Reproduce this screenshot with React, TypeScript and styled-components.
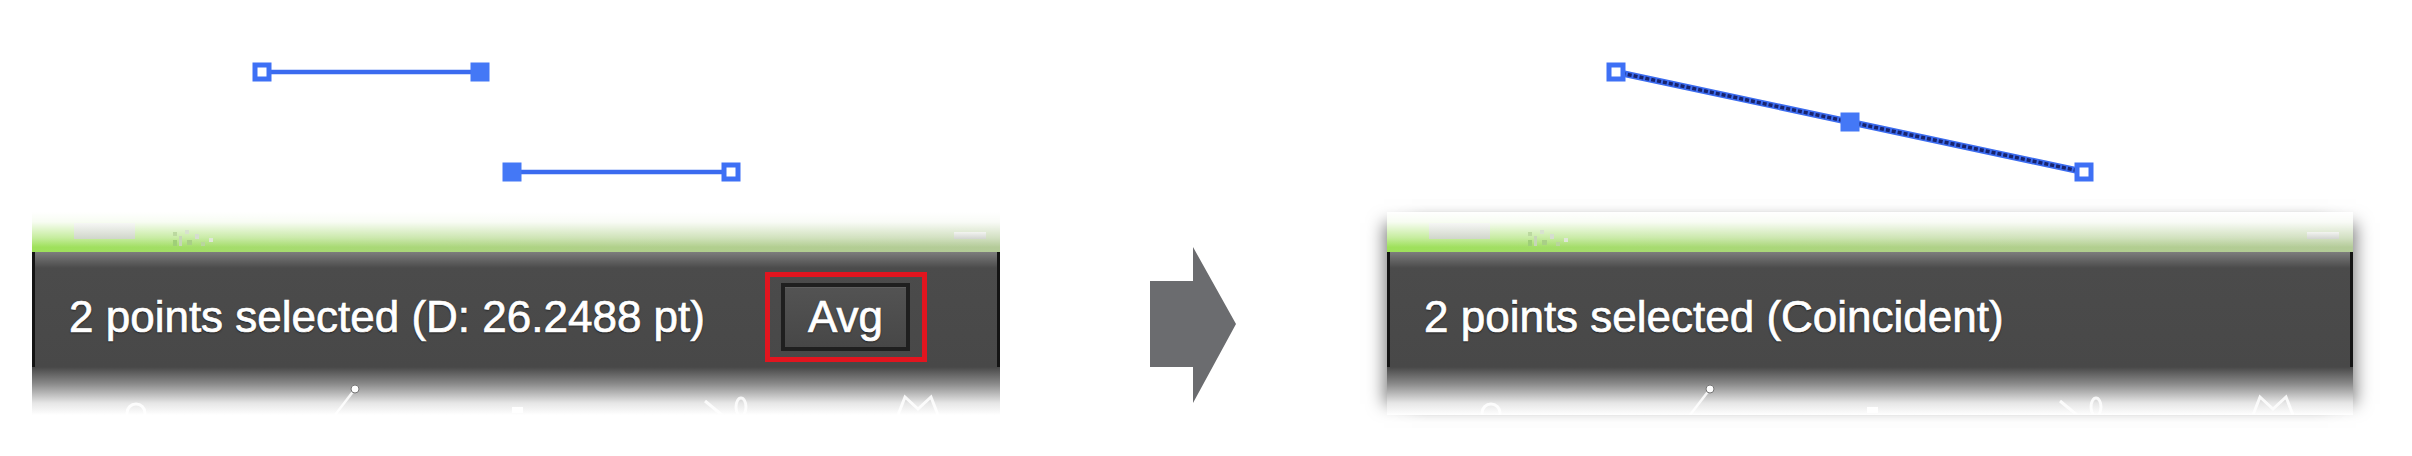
import React from 'react';
import styled, { createGlobalStyle } from 'styled-components';

const GlobalStyle = createGlobalStyle`
    html, body {
        margin: 0;
        padding: 0;
        background: #fff;
    }
    body {
        width: 2412px;
        height: 456px;
        overflow: hidden;
        font-family: 'Liberation Sans', Arial, sans-serif;
    }
`;

const Page = styled.div`
    display: flex;
    align-items: flex-start;
    height: 456px;
    padding-left: 32px;
`;

const Column = styled.div<{ $width: number; $offset?: number }>`
    display: flex;
    flex-direction: column;
    flex-shrink: 0;
    width: ${(p) => p.$width}px;
    margin-left: ${(p) => p.$offset ?? 0}px;
`;

const Canvas = styled.svg`
    display: block;
    width: 100%;
    height: 212px;
`;

const Panel = styled.div<{ $shadow?: boolean }>`
    display: flex;
    flex-direction: column;
    box-shadow: ${(p) =>
        p.$shadow
            ? '-14px 0 16px -11px rgba(0, 0, 0, 0.5), 14px 0 16px -11px rgba(0, 0, 0, 0.5)'
            : 'none'};
`;

const TabStrip = styled.div`
    display: flex;
    align-items: flex-start;
    height: 40px;
    padding-left: 42px;
    background: linear-gradient(
            to bottom,
            #fff 0%,
            rgba(255, 255, 255, 0.92) 25%,
            rgba(255, 255, 255, 0.4) 65%,
            rgba(255, 255, 255, 0) 88%
        ),
        linear-gradient(to right, #9ee15a 0%, #a6dc6e 25%, #b0d08a 60%, #b4cb99 100%);
`;

const Tab = styled.div<{ $w: number; $h: number; $top: number; $right?: boolean }>`
    width: ${(p) => p.$w}px;
    height: ${(p) => p.$h}px;
    margin-top: ${(p) => p.$top}px;
    margin-left: ${(p) => (p.$right ? 'auto' : '0')};
    margin-right: ${(p) => (p.$right ? '14px' : '0')};
    background: linear-gradient(to bottom, #f6f6f6, #d2d2d2);
    opacity: 0.85;
`;

const Noise = styled.svg`
    display: block;
    width: 44px;
    height: 24px;
    margin: 16px 0 0 38px;
`;

const StatusBar = styled.div`
    display: flex;
    align-items: center;
    height: 115px;
    box-sizing: border-box;
    padding: 15px 0 0 34px;
    border-left: 3px solid #141414;
    border-right: 3px solid #141414;
    background: linear-gradient(to bottom, #7d7d7d 0px, #4b4b4b 16px, #484848 100%);
`;

const Label = styled.span`
    color: #fff;
    font-size: 44px;
    white-space: nowrap;
    -webkit-text-stroke: 0.7px #fff;
    text-shadow: 0 1px 2px rgba(0, 0, 0, 0.75);
`;

const Highlight = styled.div`
    display: flex;
    margin-left: 60px;
    padding: 6px 12px 6px 11px;
    border: 5px solid #e2151f;
`;

const AvgButton = styled.button`
    width: 129px;
    height: 68px;
    box-sizing: border-box;
    padding: 0;
    border: 4px solid #1f1f1f;
    background: linear-gradient(to bottom, #535353, #474747);
    box-shadow: inset 0 1px 0 rgba(255, 255, 255, 0.08);
    color: #fff;
    font-family: 'Liberation Sans', Arial, sans-serif;
    font-size: 44px;
    line-height: 1;
    -webkit-text-stroke: 0.7px #fff;
    text-shadow: 0 1px 2px rgba(0, 0, 0, 0.75);
`;

const FooterFade = styled.div`
    height: 48px;
    background: linear-gradient(to bottom, #484848 0%, #8a8a8a 35%, #e6e6e6 75%, #fff 100%);
`;

const FooterIcons = styled.svg`
    display: block;
    width: 100%;
    height: 48px;
`;

const ArrowMark = styled.svg`
    display: block;
    flex-shrink: 0;
    width: 86px;
    height: 156px;
    margin: 247px 0 0 150px;
`;

type Pt = { x: number; y: number; open: boolean };

const Handle: React.FC<{ p: Pt }> = ({ p }) =>
    p.open ? (
        <rect x={p.x - 7} y={p.y - 7} width={14} height={14} fill="#fff" stroke="#3e70f5" strokeWidth={5} />
    ) : (
        <rect x={p.x - 9.5} y={p.y - 9.5} width={19} height={19} fill="#4478f6" />
    );

const Segments: React.FC<{ paths: Pt[][]; hatched?: boolean }> = ({ paths, hatched }) => (
    <Canvas>
        {paths.map((pts, i) => {
            const d = pts.map((p, j) => `${j ? 'L' : 'M'}${p.x} ${p.y}`).join(' ');
            return (
                <g key={i}>
                    <path d={d} stroke="#3b6bef" strokeWidth={hatched ? 6.5 : 4.5} fill="none" />
                    {hatched && <path d={d} stroke="#18246e" strokeWidth={3.5} strokeDasharray="4 2" fill="none" />}
                    {pts.map((p, j) => (
                        <Handle key={j} p={p} />
                    ))}
                </g>
            );
        })}
    </Canvas>
);

const Footer: React.FC = () => (
    <FooterFade>
        <FooterIcons>
            <g stroke="#fff" strokeWidth={3} fill="none" opacity={0.85}>
                <circle cx={104} cy={46} r={9} />
                <path d="M323 22 L303 48" strokeWidth={2.5} />
                <path d="M673 34 L690 48" />
                <ellipse cx={709} cy={40} rx={5} ry={9} />
                <path d="M866 48 L873 30 L886 42 L899 30 L906 48" />
            </g>
            <circle cx={323} cy={22} r={4} fill="#fff" stroke="#777" strokeWidth={1} />
            <rect x={480} y={40} width={11} height={6} fill="#fff" />
        </FooterIcons>
    </FooterFade>
);

const NoiseDots: React.FC = () => (
    <Noise viewBox="0 0 44 24">
        <rect x={0} y={4} width={4} height={4} fill="#bcd9a0" />
        <rect x={0} y={12} width={4} height={6} fill="#9fcf78" />
        <rect x={6} y={8} width={3} height={10} fill="#c6d5b8" />
        <rect x={12} y={2} width={4} height={4} fill="#d8e2cf" />
        <rect x={14} y={12} width={5} height={5} fill="#a9cf86" />
        <rect x={22} y={6} width={4} height={5} fill="#d6ddd0" />
        <rect x={28} y={14} width={4} height={4} fill="#b9d59d" />
        <rect x={36} y={10} width={4} height={4} fill="#dfe6d8" />
    </Noise>
);

const StatusPanel: React.FC<{ text: string; action?: string; shadow?: boolean }> = ({ text, action, shadow }) => (
    <Panel $shadow={shadow}>
        <TabStrip>
            <Tab $w={61} $h={16} $top={11} />
            <NoiseDots />
            <Tab $w={32} $h={7} $top={20} $right />
        </TabStrip>
        <StatusBar>
            <Label>{text}</Label>
            {action && (
                <Highlight>
                    <AvgButton type="button">{action}</AvgButton>
                </Highlight>
            )}
        </StatusBar>
        <Footer />
    </Panel>
);

const before: Pt[][] = [
    [
        { x: 230, y: 72, open: true },
        { x: 448, y: 72, open: false },
    ],
    [
        { x: 480, y: 172, open: false },
        { x: 699, y: 172, open: true },
    ],
];

const after: Pt[][] = [
    [
        { x: 229, y: 72, open: true },
        { x: 463, y: 122, open: false },
        { x: 697, y: 172, open: true },
    ],
];

export default function App() {
    return (
        <>
            <GlobalStyle />
            <Page>
                <Column $width={968}>
                    <Segments paths={before} />
                    <StatusPanel text="2 points selected (D: 26.2488 pt)" action="Avg" />
                </Column>
                <ArrowMark viewBox="0 0 86 156">
                    <polygon points="0,34 43,34 43,0 86,77 43,156 43,120 0,120" fill="#6b6c6f" />
                </ArrowMark>
                <Column $width={966} $offset={151}>
                    <Segments paths={after} hatched />
                    <StatusPanel text="2 points selected (Coincident)" shadow />
                </Column>
            </Page>
        </>
    );
}
